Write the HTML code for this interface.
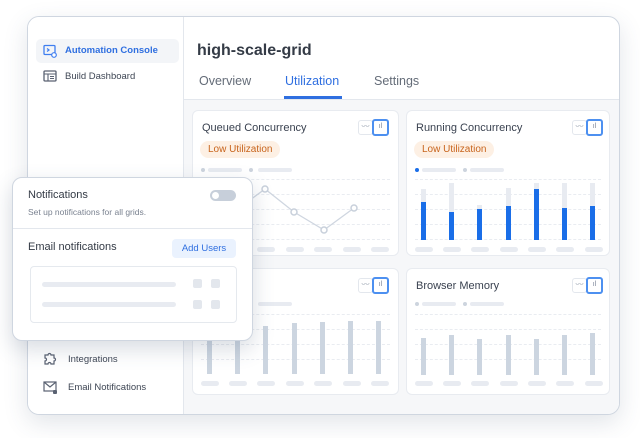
<!DOCTYPE html>
<html><head><style>
*{box-sizing:border-box;margin:0;padding:0}
body{width:640px;height:438px;background:#fff;font-family:"Liberation Sans",sans-serif;position:relative;overflow:hidden}
.abs{position:absolute}
.main{left:27px;top:16px;width:593px;height:399px;border:1px solid #cfd6e0;border-radius:12px;background:#fff;box-shadow:0 8px 24px rgba(60,80,110,.15);overflow:hidden}
.side{left:0;top:0;width:156px;height:100%;border-right:1px solid #e3e7ed;background:#fff}
.content{left:156px;top:82px;right:0;bottom:0;background:#f6f7f9;border-top:1px solid #e3e7ed}
.card{background:#fff;border:1px solid #e8ebf0;border-radius:6px}
.ct{font-size:11px;color:#3a4250;position:absolute;left:9px;top:11px}
.pill{position:absolute;background:#e8ebf1;border-radius:4px;height:4px}
.dot{position:absolute;width:4px;height:4px;border-radius:2px;background:#cdd4de}
.badge{position:absolute;left:7px;top:30px;background:#fdf0e4;color:#c8641c;font-size:10px;padding:3px 8px;border-radius:9px}
.ic1{position:absolute;width:15px;height:15px;border:1px solid #e3e7ed;border-radius:3px;font-size:8px;color:#9aa3b0;text-align:center;line-height:12px}
.ic2{position:absolute;width:17px;height:17px;border:2px solid #4d90f0;border-radius:3px;font-size:7px;color:#7a8597;text-align:center;line-height:12px}
.grid{position:absolute;height:0;border-top:1px dashed #e9ecf1}
</style></head><body>
<div class="abs main">
 <div class="abs side">
  <div class="abs" style="left:8px;top:22px;width:143px;height:24px;background:#f3f5f8;border-radius:5px"></div>
  <svg class="abs" style="left:15px;top:27px" width="14" height="14" viewBox="0 0 14 14"><rect x="1" y="1.5" width="11" height="9" rx="1" fill="none" stroke="#3f7ef0" stroke-width="1.3"/><path d="M4 4.5l2 1.5-2 1.5" fill="none" stroke="#3f7ef0" stroke-width="1.2"/><circle cx="11" cy="11" r="2.3" fill="#fff" stroke="#3f7ef0" stroke-width="1.2"/></svg>
  <div class="abs" style="left:37px;top:28px;font-size:9.5px;color:#2f6fe0;font-weight:bold">Automation Console</div>
  <svg class="abs" style="left:15px;top:53px" width="14" height="12" viewBox="0 0 14 12"><rect x="1" y="1" width="12" height="10" rx="1" fill="none" stroke="#5a6272" stroke-width="1.3"/><path d="M1 4h12M5 4v7M7 6.5h4M7 8.5h4" stroke="#5a6272" stroke-width="1.1"/></svg>
  <div class="abs" style="left:37px;top:54px;font-size:9.5px;color:#3e4654">Build Dashboard</div>
  <svg class="abs" style="left:15px;top:335px" width="14" height="14" viewBox="0 0 14 14"><path d="M2 3h3a1.5 1.5 0 013 0h3v3a1.5 1.5 0 010 3v3H8a1.5 1.5 0 00-3 0H2V9a1.5 1.5 0 000-3z" fill="none" stroke="#5a6272" stroke-width="1.2"/></svg>
  <div class="abs" style="left:40px;top:337px;font-size:9.5px;color:#3e4654">Integrations</div>
  <svg class="abs" style="left:15px;top:364px" width="15" height="14" viewBox="0 0 15 14"><rect x="1" y="1" width="12" height="9" fill="none" stroke="#5a6272" stroke-width="1.2"/><path d="M1 1l6 5 6-5" fill="none" stroke="#5a6272" stroke-width="1.2"/><rect x="10" y="9" width="4" height="4" rx="1" fill="#5a6272"/></svg>
  <div class="abs" style="left:40px;top:365px;font-size:9.5px;color:#3e4654">Email Notifications</div>
 </div>
 <div class="abs" style="left:169px;top:25px;font-size:16px;font-weight:bold;color:#343b46">high-scale-grid</div>
 <div class="abs" style="left:171px;top:57px;font-size:12.5px;color:#646c78">Overview</div>
 <div class="abs" style="left:257px;top:57px;font-size:12.5px;color:#2f6fe0">Utilization</div>
 <div class="abs" style="left:256px;top:79px;width:58px;height:3px;background:#2f6fe0"></div>
 <div class="abs" style="left:346px;top:57px;font-size:12.5px;color:#646c78">Settings</div>
 <div class="abs content"></div>
</div>

<!-- card1 -->
<div class="abs card" style="left:192px;top:110px;width:207px;height:146px">
 <div class="ct">Queued Concurrency</div><div class="badge">Low Utilization</div>
 <div class="ic1" style="left:165px;top:9px">〰</div><div class="ic2" style="left:179px;top:8px">ıl</div>
 <div class="dot" style="left:8px;top:57px"></div><div class="pill" style="left:15px;top:57px;width:34px"></div>
 <div class="dot" style="left:56px;top:57px"></div><div class="pill" style="left:65px;top:57px;width:34px"></div>
 <div class="grid" style="left:8px;right:8px;top:68px"></div><div class="grid" style="left:8px;right:8px;top:83px"></div><div class="grid" style="left:8px;right:8px;top:98px"></div><div class="grid" style="left:8px;right:8px;top:113px"></div><div class="grid" style="left:8px;right:8px;top:128px"></div>
 <svg class="abs" style="left:0;top:0" width="207" height="146"><polyline points="14,110 42,100 72,78 101,101 131,119 161,97" fill="none" stroke="#cfd6e0" stroke-width="1.3"/><g fill="#fff" stroke="#c8d0db" stroke-width="1.5"><circle cx="72" cy="78" r="3"/><circle cx="101" cy="101" r="3"/><circle cx="131" cy="119" r="3"/><circle cx="161" cy="97" r="3"/><circle cx="42" cy="100" r="3"/></g>
 <g fill="#e8ebf1"><rect x="8" y="136" width="18" height="5" rx="2.5"/><rect x="36" y="136" width="18" height="5" rx="2.5"/><rect x="64" y="136" width="18" height="5" rx="2.5"/><rect x="93" y="136" width="18" height="5" rx="2.5"/><rect x="121" y="136" width="18" height="5" rx="2.5"/><rect x="150" y="136" width="18" height="5" rx="2.5"/><rect x="178" y="136" width="18" height="5" rx="2.5"/></g></svg>
</div>
<!-- card2 -->
<div class="abs card" style="left:406px;top:110px;width:204px;height:146px">
 <div class="ct">Running Concurrency</div><div class="badge">Low Utilization</div>
 <div class="ic1" style="left:165px;top:9px">〰</div><div class="ic2" style="left:179px;top:8px">ıl</div>
 <div class="dot" style="left:8px;top:57px;background:#1a6ee8"></div><div class="pill" style="left:15px;top:57px;width:34px"></div>
 <div class="dot" style="left:56px;top:57px"></div><div class="pill" style="left:63px;top:57px;width:34px"></div>
 <div class="grid" style="left:8px;right:8px;top:68px"></div><div class="grid" style="left:8px;right:8px;top:83px"></div><div class="grid" style="left:8px;right:8px;top:98px"></div><div class="grid" style="left:8px;right:8px;top:113px"></div><div class="grid" style="left:8px;right:8px;top:128px"></div>
 <svg class="abs" style="left:0;top:0" width="204" height="146">
 <g fill="#e8ebf1"><rect x="14" y="78" width="5" height="51"/><rect x="42" y="72" width="5" height="57"/><rect x="70" y="94" width="5" height="35"/><rect x="99" y="77" width="5" height="52"/><rect x="127" y="72" width="5" height="57"/><rect x="155" y="72" width="5" height="57"/><rect x="183" y="72" width="5" height="57"/></g>
 <g fill="#1a6ee8"><rect x="14" y="91" width="5" height="38"/><rect x="42" y="101" width="5" height="28"/><rect x="70" y="98" width="5" height="31"/><rect x="99" y="95" width="5" height="34"/><rect x="127" y="78" width="5" height="51"/><rect x="155" y="97" width="5" height="32"/><rect x="183" y="95" width="5" height="34"/></g>
 <g fill="#e8ebf1"><rect x="8" y="136" width="18" height="5" rx="2.5"/><rect x="36" y="136" width="18" height="5" rx="2.5"/><rect x="64" y="136" width="18" height="5" rx="2.5"/><rect x="93" y="136" width="18" height="5" rx="2.5"/><rect x="121" y="136" width="18" height="5" rx="2.5"/><rect x="149" y="136" width="18" height="5" rx="2.5"/><rect x="178" y="136" width="18" height="5" rx="2.5"/></g></svg>
</div>
<!-- card3 -->
<div class="abs card" style="left:192px;top:268px;width:207px;height:127px">
 <div class="ct">CPU</div>
 <div class="ic1" style="left:165px;top:9px">〰</div><div class="ic2" style="left:179px;top:8px">ıl</div>
 <div class="pill" style="left:65px;top:33px;width:34px"></div>
 <div class="grid" style="left:8px;right:8px;top:45px"></div><div class="grid" style="left:8px;right:8px;top:60px"></div><div class="grid" style="left:8px;right:8px;top:75px"></div><div class="grid" style="left:8px;right:8px;top:90px"></div>
 <svg class="abs" style="left:0;top:0" width="207" height="127">
 <g fill="#ccd5e0"><rect x="14" y="60" width="5" height="45"/><rect x="42" y="58" width="5" height="47"/><rect x="70" y="57" width="5" height="48"/><rect x="99" y="54" width="5" height="51"/><rect x="127" y="53" width="5" height="52"/><rect x="155" y="52" width="5" height="53"/><rect x="183" y="52" width="5" height="53"/></g>
 <g fill="#e8ebf1"><rect x="8" y="112" width="18" height="5" rx="2.5"/><rect x="36" y="112" width="18" height="5" rx="2.5"/><rect x="64" y="112" width="18" height="5" rx="2.5"/><rect x="93" y="112" width="18" height="5" rx="2.5"/><rect x="121" y="112" width="18" height="5" rx="2.5"/><rect x="150" y="112" width="18" height="5" rx="2.5"/><rect x="178" y="112" width="18" height="5" rx="2.5"/></g></svg>
</div>
<!-- card4 -->
<div class="abs card" style="left:406px;top:268px;width:204px;height:127px">
 <div class="ct">Browser Memory</div>
 <div class="ic1" style="left:165px;top:9px">〰</div><div class="ic2" style="left:179px;top:8px">ıl</div>
 <div class="dot" style="left:8px;top:33px"></div><div class="pill" style="left:15px;top:33px;width:34px"></div>
 <div class="dot" style="left:56px;top:33px"></div><div class="pill" style="left:63px;top:33px;width:34px"></div>
 <div class="grid" style="left:8px;right:8px;top:45px"></div><div class="grid" style="left:8px;right:8px;top:60px"></div><div class="grid" style="left:8px;right:8px;top:75px"></div><div class="grid" style="left:8px;right:8px;top:90px"></div>
 <svg class="abs" style="left:0;top:0" width="204" height="127">
 <g fill="#ccd5e0"><rect x="14" y="69" width="5" height="37"/><rect x="42" y="66" width="5" height="40"/><rect x="70" y="70" width="5" height="36"/><rect x="99" y="66" width="5" height="40"/><rect x="127" y="70" width="5" height="36"/><rect x="155" y="66" width="5" height="40"/><rect x="183" y="64" width="5" height="42"/></g>
 <g fill="#e8ebf1"><rect x="8" y="112" width="18" height="5" rx="2.5"/><rect x="36" y="112" width="18" height="5" rx="2.5"/><rect x="64" y="112" width="18" height="5" rx="2.5"/><rect x="93" y="112" width="18" height="5" rx="2.5"/><rect x="121" y="112" width="18" height="5" rx="2.5"/><rect x="149" y="112" width="18" height="5" rx="2.5"/><rect x="178" y="112" width="18" height="5" rx="2.5"/></g></svg>
</div>

<!-- popup -->
<div class="abs" style="left:12px;top:177px;width:241px;height:164px;background:#fff;border:1px solid #cfd6e0;border-radius:10px;box-shadow:0 8px 22px rgba(60,80,110,.2)">
 <div class="abs" style="left:15px;top:11px;font-size:11px;color:#343b46">Notifications</div>
 <div class="abs" style="left:15px;top:29px;font-size:8.5px;color:#7a8290">Set up notifications for all grids.</div>
 <div class="abs" style="left:197px;top:12px;width:26px;height:11px;border-radius:6px;background:#c7cfda"><div class="abs" style="left:2px;top:2px;width:7px;height:7px;border-radius:4px;background:#fff"></div></div>
 <div class="abs" style="left:0;right:0;top:50px;border-top:1px solid #e3e7ed"></div>
 <div class="abs" style="left:15px;top:63px;font-size:11px;color:#343b46">Email notifications</div>
 <div class="abs" style="left:159px;top:61px;width:64px;height:19px;background:#eaf2fe;border-radius:4px;color:#2f6fe0;font-size:9.5px;text-align:center;line-height:19px">Add Users</div>
 <div class="abs" style="left:17px;top:88px;width:207px;height:57px;border:1px solid #e5e9ee;border-radius:4px">
  <div class="pill" style="left:11px;top:15px;width:134px;height:5px"></div>
  <div class="pill" style="left:11px;top:35px;width:134px;height:5px"></div>
  <div class="abs" style="left:162px;top:12px;width:9px;height:9px;border-radius:2px;background:#e3e7ed"></div>
  <div class="abs" style="left:180px;top:12px;width:9px;height:9px;border-radius:2px;background:#e3e7ed"></div>
  <div class="abs" style="left:162px;top:33px;width:9px;height:9px;border-radius:2px;background:#e3e7ed"></div>
  <div class="abs" style="left:180px;top:33px;width:9px;height:9px;border-radius:2px;background:#e3e7ed"></div>
 </div>
</div>
</body></html>
